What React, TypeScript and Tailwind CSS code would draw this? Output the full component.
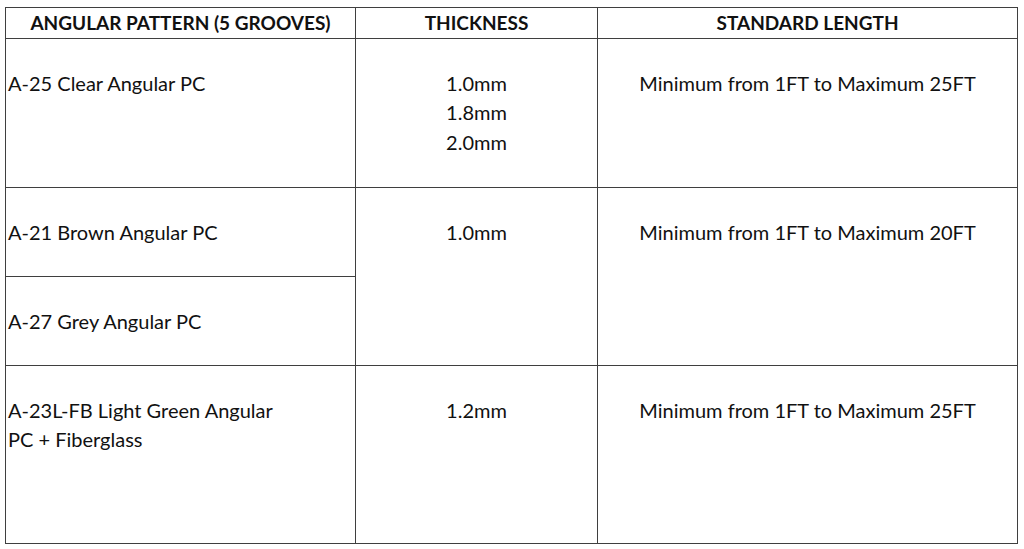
import React from "react";

const cell = "border border-[#3f3f3f] align-top p-0";

const App: React.FC = () => {
  return (
    <div
      className="w-[1024px] h-[549px] bg-white text-[#111] pl-[5px] pt-[7px]"
      style={{ fontFamily: "Lato, 'Noto Sans', sans-serif" }}
    >
      <table className="border-collapse table-fixed w-[1012px] text-[20px] leading-[29.5px]">
        <colgroup>
          <col className="w-[350px]" />
          <col className="w-[242px]" />
          <col className="w-[420px]" />
        </colgroup>
        <thead>
          <tr className="h-[30px]">
            <th className={`${cell} align-middle text-center font-bold text-[19px]`}>
              ANGULAR PATTERN (5 GROOVES)
            </th>
            <th className={`${cell} align-middle text-center font-bold text-[19px]`}>THICKNESS</th>
            <th className={`${cell} align-middle text-center font-bold text-[19px]`}>STANDARD LENGTH</th>
          </tr>
        </thead>
        <tbody>
          <tr className="h-[149px]">
            <td className={`${cell} pl-[2px] pt-[30px]`}>A-25 Clear Angular PC</td>
            <td className={`${cell} text-center pt-[30px]`}>
              <div>1.0mm</div>
              <div>1.8mm</div>
              <div>2.0mm</div>
            </td>
            <td className={`${cell} text-center pt-[30px]`}>Minimum from 1FT to Maximum 25FT</td>
          </tr>
          <tr className="h-[89px]">
            <td className={`${cell} pl-[2px] pt-[30px]`}>A-21 Brown Angular PC</td>
            <td rowSpan={2} className={`${cell} text-center pt-[30px]`}>1.0mm</td>
            <td rowSpan={2} className={`${cell} text-center pt-[30px]`}>
              Minimum from 1FT to Maximum 20FT
            </td>
          </tr>
          <tr className="h-[89px]">
            <td className={`${cell} pl-[2px] pt-[30px]`}>A-27 Grey Angular PC</td>
          </tr>
          <tr className="h-[178px]">
            <td className={`${cell} pl-[2px] pt-[30px]`}>
              A-23L-FB Light Green Angular
              <br />
              PC + Fiberglass
            </td>
            <td className={`${cell} text-center pt-[30px]`}>1.2mm</td>
            <td className={`${cell} text-center pt-[30px]`}>Minimum from 1FT to Maximum 25FT</td>
          </tr>
        </tbody>
      </table>
    </div>
  );
};

export default App;
